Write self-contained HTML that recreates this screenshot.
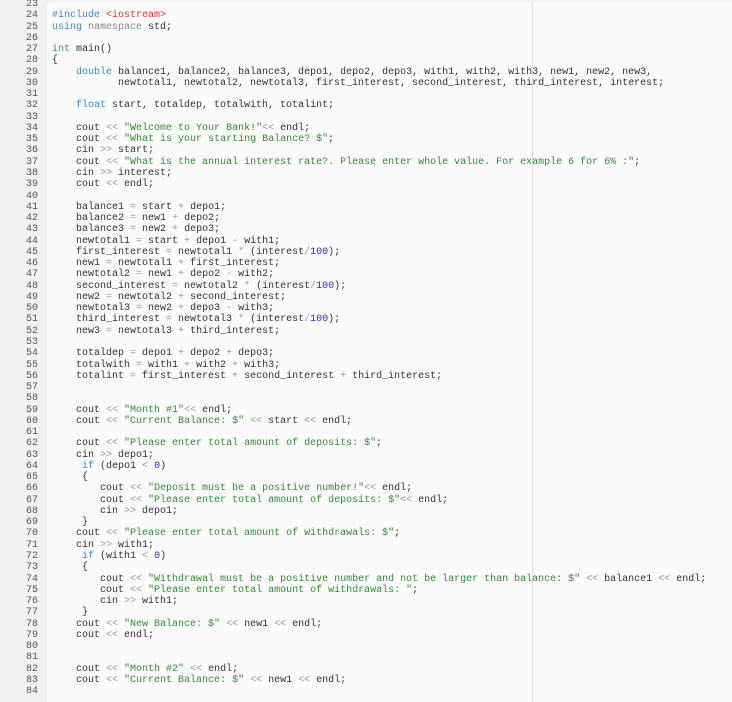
<!DOCTYPE html>
<html><head><meta charset="utf-8"><style>
html,body{margin:0;padding:0;background:#f2f2f2;width:732px;height:693px;overflow:hidden;}
.g{position:absolute;left:0;top:0;width:47px;height:693px;background:#f2f2f2;}
.c{position:absolute;left:47px;top:2px;width:700px;height:700px;background:#fafafa;border-radius:5px 0 0 0;}
.ruler{position:absolute;left:532px;top:2px;width:1px;height:700px;background:#ddd;}
pre{margin:0;position:absolute;top:-1px;font-family:"Liberation Mono",monospace;font-size:10px;line-height:11.27px;}
.nums{left:0;width:38px;text-align:right;color:#555;}
.code{left:52px;color:#333;}
.k{color:#3b87db}.s{color:#2f8f2f}.o{color:#999}.n{color:#2b2bd0}.r{color:#d33}.ns{color:#888}
</style></head><body>
<div class="g"></div><div class="c"></div><div class="ruler"></div>
<pre class="nums">23
24
25
26
27
28
29
30
31
32
33
34
35
36
37
38
39
40
41
42
43
44
45
46
47
48
49
50
51
52
53
54
55
56
57
58
59
60
61
62
63
64
65
66
67
68
69
70
71
72
73
74
75
76
77
78
79
80
81
82
83
84</pre>
<pre class="code">&nbsp;
<span class="k">#include</span> <span class="r">&lt;iostream&gt;</span>
<span class="k">using</span> <span class="ns">namespace</span> std;

<span class="k">int</span> main()
{
    <span class="k">double</span> balance1, balance2, balance3, depo1, depo2, depo3, with1, with2, with3, new1, new2, new3,
           newtotal1, newtotal2, newtotal3, first_interest, second_interest, third_interest, interest;

    <span class="k">float</span> start, totaldep, totalwith, totalint;

    cout <span class="o">&lt;&lt;</span> <span class="s">"Welcome to Your Bank!"</span><span class="o">&lt;&lt;</span> endl;
    cout <span class="o">&lt;&lt;</span> <span class="s">"What is your starting Balance? $"</span>;
    cin <span class="o">&gt;&gt;</span> start;
    cout <span class="o">&lt;&lt;</span> <span class="s">"What is the annual interest rate?. Please enter whole value. For example 6 for 6% :"</span>;
    cin <span class="o">&gt;&gt;</span> interest;
    cout <span class="o">&lt;&lt;</span> endl;

    balance1 <span class="o">=</span> start <span class="o">+</span> depo1;
    balance2 <span class="o">=</span> new1 <span class="o">+</span> depo2;
    balance3 <span class="o">=</span> new2 <span class="o">+</span> depo3;
    newtotal1 <span class="o">=</span> start <span class="o">+</span> depo1 <span class="o">-</span> with1;
    first_interest <span class="o">=</span> newtotal1 <span class="o">*</span> (interest<span class="o">/</span><span class="n">100</span>);
    new1 <span class="o">=</span> newtotal1 <span class="o">+</span> first_interest;
    newtotal2 <span class="o">=</span> new1 <span class="o">+</span> depo2 <span class="o">-</span> with2;
    second_interest <span class="o">=</span> newtotal2 <span class="o">*</span> (interest<span class="o">/</span><span class="n">100</span>);
    new2 <span class="o">=</span> newtotal2 <span class="o">+</span> second_interest;
    newtotal3 <span class="o">=</span> new2 <span class="o">+</span> depo3 <span class="o">-</span> with3;
    third_interest <span class="o">=</span> newtotal3 <span class="o">*</span> (interest<span class="o">/</span><span class="n">100</span>);
    new3 <span class="o">=</span> newtotal3 <span class="o">+</span> third_interest;

    totaldep <span class="o">=</span> depo1 <span class="o">+</span> depo2 <span class="o">+</span> depo3;
    totalwith <span class="o">=</span> with1 <span class="o">+</span> with2 <span class="o">+</span> with3;
    totalint <span class="o">=</span> first_interest <span class="o">+</span> second_interest <span class="o">+</span> third_interest;


    cout <span class="o">&lt;&lt;</span> <span class="s">"Month #1"</span><span class="o">&lt;&lt;</span> endl;
    cout <span class="o">&lt;&lt;</span> <span class="s">"Current Balance: $"</span> <span class="o">&lt;&lt;</span> start <span class="o">&lt;&lt;</span> endl;

    cout <span class="o">&lt;&lt;</span> <span class="s">"Please enter total amount of deposits: $"</span>;
    cin <span class="o">&gt;&gt;</span> depo1;
     <span class="k">if</span> (depo1 <span class="o">&lt;</span> <span class="n">0</span>)
     {
        cout <span class="o">&lt;&lt;</span> <span class="s">"Deposit must be a positive number!"</span><span class="o">&lt;&lt;</span> endl;
        cout <span class="o">&lt;&lt;</span> <span class="s">"Please enter total amount of deposits: $"</span><span class="o">&lt;&lt;</span> endl;
        cin <span class="o">&gt;&gt;</span> depo1;
     }
    cout <span class="o">&lt;&lt;</span> <span class="s">"Please enter total amount of withdrawals: $"</span>;
    cin <span class="o">&gt;&gt;</span> with1;
     <span class="k">if</span> (with1 <span class="o">&lt;</span> <span class="n">0</span>)
     {
        cout <span class="o">&lt;&lt;</span> <span class="s">"Withdrawal must be a positive number and not be larger than balance: $"</span> <span class="o">&lt;&lt;</span> balance1 <span class="o">&lt;&lt;</span> endl;
        cout <span class="o">&lt;&lt;</span> <span class="s">"Please enter total amount of withdrawals: "</span>;
        cin <span class="o">&gt;&gt;</span> with1;
     }
    cout <span class="o">&lt;&lt;</span> <span class="s">"New Balance: $"</span> <span class="o">&lt;&lt;</span> new1 <span class="o">&lt;&lt;</span> endl;
    cout <span class="o">&lt;&lt;</span> endl;


    cout <span class="o">&lt;&lt;</span> <span class="s">"Month #2"</span> <span class="o">&lt;&lt;</span> endl;
    cout <span class="o">&lt;&lt;</span> <span class="s">"Current Balance: $"</span> <span class="o">&lt;&lt;</span> new1 <span class="o">&lt;&lt;</span> endl;
</pre>
</body></html>
